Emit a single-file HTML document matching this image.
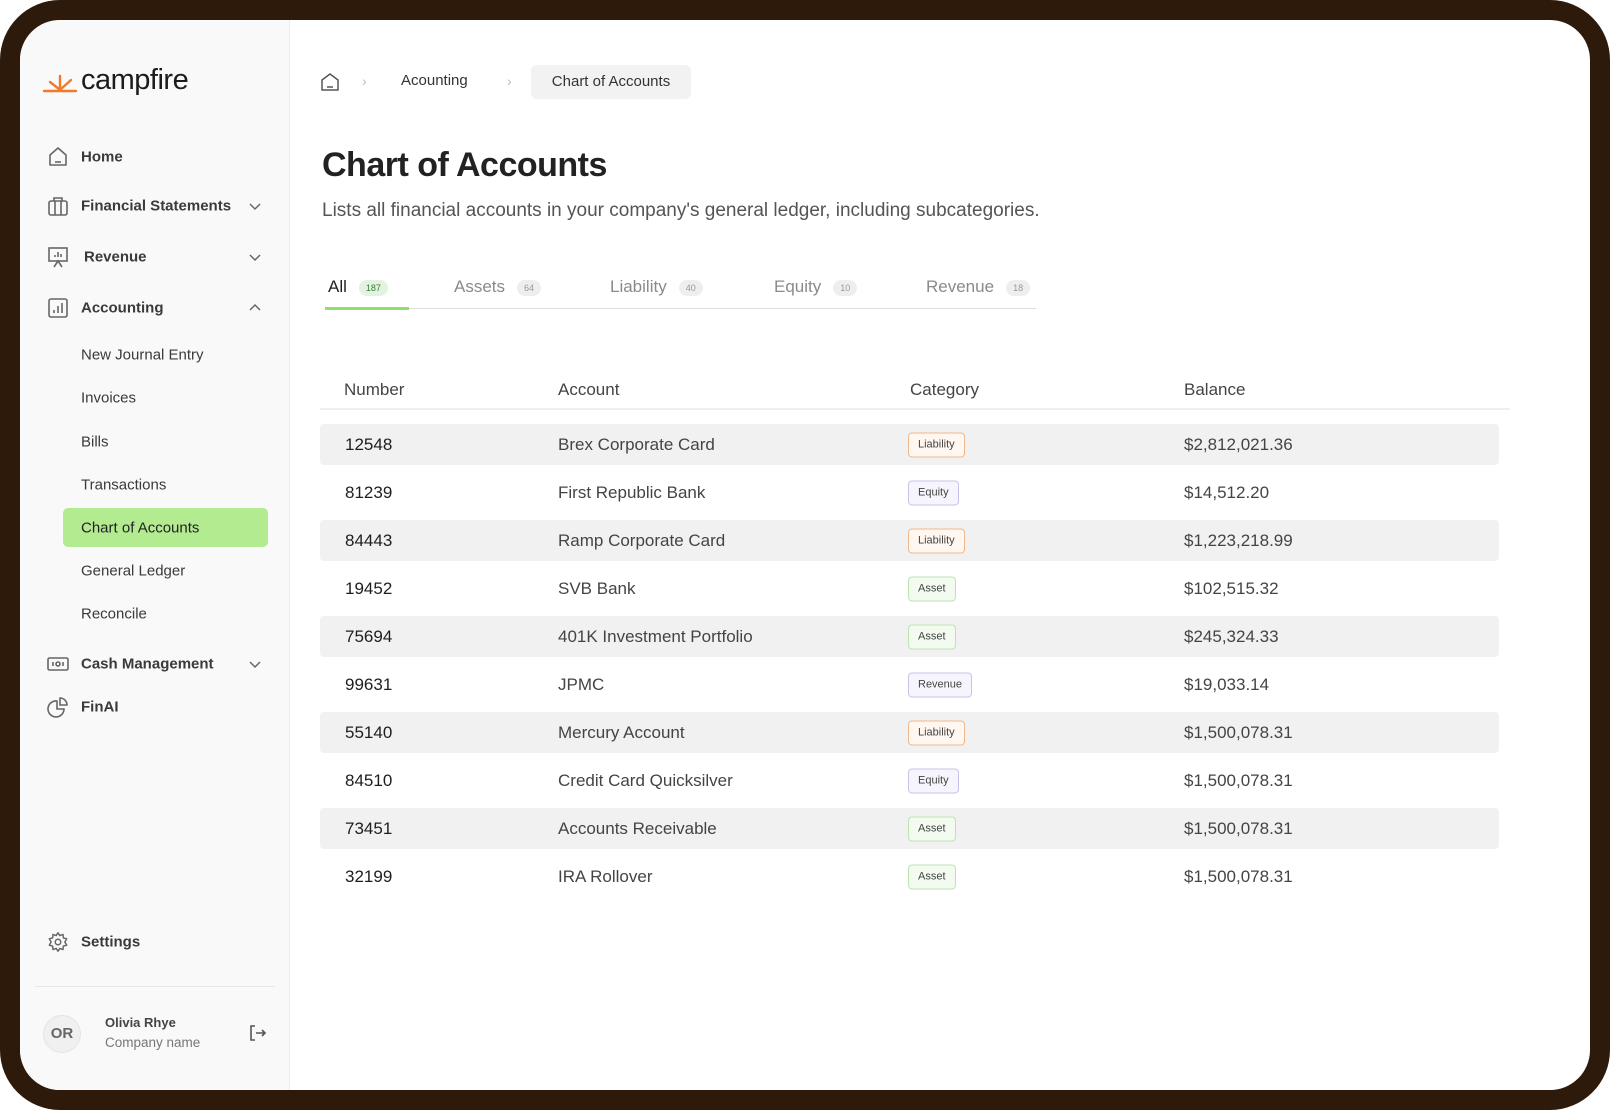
<!DOCTYPE html>
<html><head><meta charset="utf-8"><style>
*{box-sizing:border-box;margin:0;padding:0}
body{width:1610px;height:1110px;background:#fff;font-family:"Liberation Sans",sans-serif;overflow:hidden}
.frame{position:absolute;left:0;top:0;width:1610px;height:1110px;background:#2e1a0b;border-radius:60px}
.panel{position:absolute;left:20px;top:20px;width:1570px;height:1070px;background:#fff;border-radius:40px;overflow:hidden}
.side{position:absolute;left:0;top:0;width:270px;height:1070px;background:#f9f9f9;border-right:1px solid #ededed}
.abs{position:absolute;white-space:nowrap}
.nav{position:absolute;left:61px;font-size:15px;font-weight:bold;color:#3a3a3a;transform:translateY(-50%);white-space:nowrap}
.sub{position:absolute;left:61px;font-size:15px;color:#3a3a3a;transform:translateY(-50%);white-space:nowrap}
.ic{position:absolute;left:27px;transform:translateY(-50%)}
.chev{position:absolute;left:228px;transform:translateY(-50%)}
.main{position:absolute;left:250px;top:0;width:1300px}
.row{position:absolute;left:300px;width:1179px;height:41px;border-radius:4px}
.row.g{background:#f1f1f1}
.row span{position:absolute;top:50%;transform:translateY(-50%);font-size:17px;color:#444;white-space:nowrap}
.row .n{left:25px;color:#1e1e1e;font-weight:500}
.row .a{left:238px}
.row .b{left:864px}
.badge{position:absolute;left:588px;top:50%;transform:translateY(-50%);height:25px;padding:0 9px;font-size:11px;line-height:23px;border-radius:4px;border:1px solid;color:#444}
.l{border-color:#f0b88a;background:#fff7f0}.e{border-color:#c8c2ea;background:#f6f5fd}.s{border-color:#b9e6b0;background:#f3fbf1}
.tab{position:absolute;top:267px;transform:translateY(-50%);font-size:17px;color:#8a8a8a;white-space:nowrap}
.cnt{display:inline-block;margin-left:12px;font-size:9px;background:#eee;color:#999;border-radius:9px;padding:3px 7px;vertical-align:middle}
</style></head><body>
<div class="frame"></div>
<div class="panel">
<div class="side">
 <svg class="abs" style="left:22px;top:52px" width="36" height="22" viewBox="0 0 36 22"><g stroke="#f07a2a" stroke-width="2.4" stroke-linecap="round" fill="none"><path d="M2 19H34"/><path d="M18 18V4"/><path d="M17 17L8 10"/><path d="M19 17L29 8"/></g></svg>
 <div class="abs" style="left:61px;top:44px;font-size:29px;color:#1c1c1c;letter-spacing:-0.5px">campfire</div>
 <svg class="ic" style="top:137px" width="22" height="22" viewBox="0 0 22 22" fill="none" stroke="#666" stroke-width="1.6"><path d="M3 9L11 2L19 9V19H3Z" stroke-linejoin="round"/><path d="M8 16H14"/></svg>
 <div class="nav" style="top:137px">Home</div>
 <svg class="ic" style="top:186px" width="22" height="22" viewBox="0 0 22 22" fill="none" stroke="#666" stroke-width="1.6"><rect x="2" y="6" width="18" height="14" rx="2"/><path d="M7 6V3H15V6M8 6V20M14 6V20"/></svg>
 <div class="nav" style="top:186px">Financial Statements</div>
 <svg class="chev" style="top:186px" width="14" height="10" viewBox="0 0 14 10"><path d="M2 3L7 8L12 3" stroke="#666" stroke-width="1.5" fill="none"/></svg>
 <svg class="ic" style="top:237px" width="22" height="22" viewBox="0 0 22 22" fill="none" stroke="#666" stroke-width="1.6"><rect x="2" y="2" width="18" height="13"/><path d="M8 11V9M11 11V6M14 11V8M7 21L11 15L15 21"/></svg>
 <div class="nav" style="top:237px;left:64px">Revenue</div>
 <svg class="chev" style="top:237px" width="14" height="10" viewBox="0 0 14 10"><path d="M2 3L7 8L12 3" stroke="#666" stroke-width="1.5" fill="none"/></svg>
 <svg class="ic" style="top:288px" width="22" height="22" viewBox="0 0 22 22" fill="none" stroke="#666" stroke-width="1.6"><rect x="2" y="2" width="18" height="18" rx="2"/><path d="M7 16V13M11 16V9M15 16V6"/></svg>
 <div class="nav" style="top:288px">Accounting</div>
 <svg class="chev" style="top:288px" width="14" height="10" viewBox="0 0 14 10"><path d="M2 7L7 2L12 7" stroke="#666" stroke-width="1.5" fill="none"/></svg>
 <div class="sub" style="top:335px">New Journal Entry</div>
 <div class="sub" style="top:378px">Invoices</div>
 <div class="sub" style="top:422px">Bills</div>
 <div class="sub" style="top:465px">Transactions</div>
 <div class="abs" style="left:43px;top:488px;width:205px;height:39px;background:#b3eb91;border-radius:5px"></div>
 <div class="sub" style="top:508px;color:#222">Chart of Accounts</div>
 <div class="sub" style="top:551px">General Ledger</div>
 <div class="sub" style="top:594px">Reconcile</div>
 <svg class="ic" style="top:644px" width="22" height="22" viewBox="0 0 22 22" fill="none" stroke="#666" stroke-width="1.6"><rect x="1" y="5" width="20" height="12" rx="1.5"/><path d="M6 9V13M16 9V13"/><circle cx="11" cy="11" r="2"/></svg>
 <div class="nav" style="top:644px">Cash Management</div>
 <svg class="chev" style="top:644px" width="14" height="10" viewBox="0 0 14 10"><path d="M2 3L7 8L12 3" stroke="#666" stroke-width="1.5" fill="none"/></svg>
 <svg class="ic" style="top:687px" width="22" height="22" viewBox="0 0 22 22" fill="none" stroke="#666" stroke-width="1.6"><path d="M10 5A8 8 0 1 0 17 13H10Z"/><path d="M13 2A7 7 0 0 1 20 9H13Z"/></svg>
 <div class="nav" style="top:687px">FinAI</div>
 <svg class="ic" style="top:922px" width="22" height="22" viewBox="0 0 24 24" fill="none" stroke="#666" stroke-width="1.6"><circle cx="12" cy="12" r="3"/><path d="M12 2L14 5L17.5 3.8L17.8 7.5L21.5 8.5L19.5 12L21.5 15.5L17.8 16.5L17.5 20.2L14 19L12 22L10 19L6.5 20.2L6.2 16.5L2.5 15.5L4.5 12L2.5 8.5L6.2 7.5L6.5 3.8L10 5Z" stroke-linejoin="round"/></svg>
 <div class="nav" style="top:922px">Settings</div>
 <div class="abs" style="left:15px;top:966px;width:240px;height:1px;background:#e6e6e6"></div>
 <div class="abs" style="left:23px;top:995px;width:38px;height:38px;border-radius:50%;background:#f0f0f0;border:1px solid #e4e4e4;font-size:15px;font-weight:bold;color:#666;text-align:center;line-height:36px">OR</div>
 <div class="abs" style="left:85px;top:995px;font-size:13px;font-weight:bold;color:#444">Olivia Rhye</div>
 <div class="abs" style="left:85px;top:1015px;font-size:13.5px;color:#777">Company name</div>
 <svg class="abs" style="left:228px;top:1003px" width="20" height="20" viewBox="0 0 20 20" fill="none" stroke="#555" stroke-width="1.6"><path d="M7 3H3V17H7M8 10H17M14 7L17 10L14 13"/></svg>
</div>
<div class="main">
 <svg class="abs" style="left:50px;top:52px" width="20" height="20" viewBox="0 0 20 20" fill="none" stroke="#555" stroke-width="1.5"><path d="M2 8L10 2L18 8V18H2Z" stroke-linejoin="round"/><path d="M7 15H13"/></svg>
 <div class="abs" style="left:92px;top:53px;color:#bbb;font-size:14px">›</div>
 <div class="abs" style="left:131px;top:52px;font-size:15px;color:#333">Acounting</div>
 <div class="abs" style="left:237px;top:53px;color:#bbb;font-size:14px">›</div>
 <div class="abs" style="left:261px;top:45px;width:160px;height:34px;background:#f2f2f2;border-radius:6px;font-size:15px;color:#333;text-align:center;line-height:34px;font-weight:500">Chart of Accounts</div>
 <div class="abs" style="left:52px;top:126px;font-size:34px;font-weight:bold;color:#222;letter-spacing:-0.5px">Chart of Accounts</div>
 <div class="abs" style="left:52px;top:180px;font-size:19px;color:#555">Lists all financial accounts in your company's general ledger, including subcategories.</div>
</div>
<div class="tab" style="left:308px;color:#222">All<span class="cnt" style="background:#e2f3e0;color:#3a7a3a">187</span></div>
<div class="tab" style="left:434px">Assets<span class="cnt">64</span></div>
<div class="tab" style="left:590px">Liability<span class="cnt">40</span></div>
<div class="tab" style="left:754px">Equity<span class="cnt">10</span></div>
<div class="tab" style="left:906px">Revenue<span class="cnt">18</span></div>
<div class="abs" style="left:305px;top:288px;width:711px;height:1px;background:#ddd"></div>
<div class="abs" style="left:305px;top:287px;width:84px;height:3px;background:#8ee06a"></div>
<div class="abs" style="left:324px;top:360px;font-size:17px;color:#444">Number</div>
<div class="abs" style="left:538px;top:360px;font-size:17px;color:#444">Account</div>
<div class="abs" style="left:890px;top:360px;font-size:17px;color:#444">Category</div>
<div class="abs" style="left:1164px;top:360px;font-size:17px;color:#444">Balance</div>
<div class="abs" style="left:300px;top:388px;width:1190px;height:2px;background:#eee"></div>
<div class="row g" style="top:404px"><span class="n">12548</span><span class="a">Brex Corporate Card</span><div class="badge l">Liability</div><span class="b">$2,812,021.36</span></div>
<div class="row" style="top:452px"><span class="n">81239</span><span class="a">First Republic Bank</span><div class="badge e">Equity</div><span class="b">$14,512.20</span></div>
<div class="row g" style="top:500px"><span class="n">84443</span><span class="a">Ramp Corporate Card</span><div class="badge l">Liability</div><span class="b">$1,223,218.99</span></div>
<div class="row" style="top:548px"><span class="n">19452</span><span class="a">SVB Bank</span><div class="badge s">Asset</div><span class="b">$102,515.32</span></div>
<div class="row g" style="top:596px"><span class="n">75694</span><span class="a">401K Investment Portfolio</span><div class="badge s">Asset</div><span class="b">$245,324.33</span></div>
<div class="row" style="top:644px"><span class="n">99631</span><span class="a">JPMC</span><div class="badge e">Revenue</div><span class="b">$19,033.14</span></div>
<div class="row g" style="top:692px"><span class="n">55140</span><span class="a">Mercury Account</span><div class="badge l">Liability</div><span class="b">$1,500,078.31</span></div>
<div class="row" style="top:740px"><span class="n">84510</span><span class="a">Credit Card Quicksilver</span><div class="badge e">Equity</div><span class="b">$1,500,078.31</span></div>
<div class="row g" style="top:788px"><span class="n">73451</span><span class="a">Accounts Receivable</span><div class="badge s">Asset</div><span class="b">$1,500,078.31</span></div>
<div class="row" style="top:836px"><span class="n">32199</span><span class="a">IRA Rollover</span><div class="badge s">Asset</div><span class="b">$1,500,078.31</span></div>
</div>
</body></html>
